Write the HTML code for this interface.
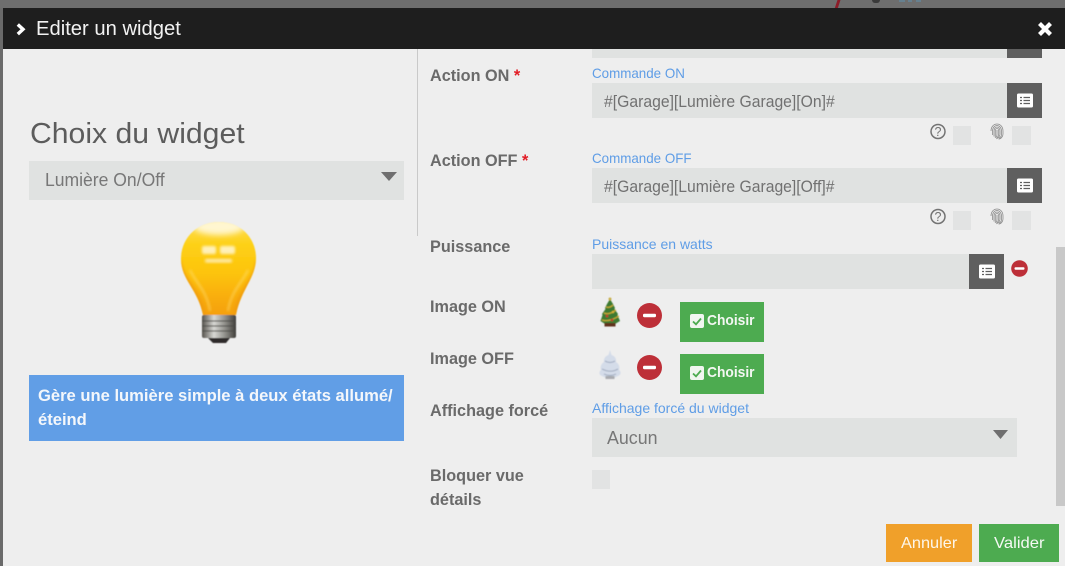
<!DOCTYPE html>
<html lang="fr"><head><meta charset="utf-8"><title>Editer un widget</title>
<style>
html,body{margin:0;padding:0}
body{width:1065px;height:566px;overflow:hidden;position:relative;background:#6e6e6e;font-family:"Liberation Sans",sans-serif}
.a{position:absolute}
.t{position:absolute;white-space:nowrap;transform-origin:0 50%}
.lab{font-size:17px;font-weight:bold;color:#6a6a6a;line-height:20px;transform:scaleX(.955)}
.hint{font-size:14px;color:#5f9de6;line-height:16px;transform:scaleX(1)}
.inp{position:absolute;background:#e0e2e1;height:35px}
.val{font-size:17px;color:#717171;line-height:20px;transform:scaleX(.925)}
.btn{position:absolute;background:#5f5f5f;width:35px;height:35px}
.cb{position:absolute;background:#e2e3e3;width:18px;height:19px}
.grn{position:absolute;background:#4dab50}
.w{color:#fff}
svg{position:absolute;overflow:visible}
</style></head><body>

<div class="a" style="left:836px;top:0;width:3px;height:9px;background:#8c1c28;transform:skewX(-18deg)"></div>
<div class="a" style="left:872px;top:0;width:8px;height:3px;background:#3a3a3a;border-radius:0 0 4px 4px"></div>
<div class="a" style="left:899px;top:0;width:6px;height:2px;background:#66808f"></div>
<div class="a" style="left:908px;top:0;width:4px;height:2px;background:#66808f"></div>
<div class="a" style="left:916px;top:0;width:5px;height:2px;background:#66808f"></div>

<div class="a" style="left:3px;top:8px;width:1062px;height:558px;background:#eeeeee"></div>
<div class="a" style="left:3px;top:8px;width:1062px;height:41px;background:#1e1e1e"></div>

<svg style="left:16px;top:23px" width="10" height="13" viewBox="0 0 10 13"><path d="M1.800 1.500 7 6.300 1.800 11.100" fill="none" stroke="#fff" stroke-width="3.400"/></svg>
<div class="t w" style="left:36px;top:17px;font-size:20px;line-height:24px;color:#f2f2f2;transform:scaleX(1.01)">Editer un widget</div>
<svg style="left:1037px;top:21px" width="16" height="16" viewBox="0 0 16 16"><path d="M2.500 2.500 13.500 13.500M13.500 2.500 2.500 13.500" fill="none" stroke="#fff" stroke-width="4.200"/></svg>

<div class="a" style="left:417px;top:49px;width:1px;height:187px;background:#c9c9c9"></div>

<div class="t" style="left:30px;top:117px;font-size:29px;line-height:34px;color:#5c5c5c;transform:scaleX(1.04)">Choix du widget</div>
<div class="a" style="left:29px;top:161px;width:375px;height:39px;background:#e0e2e1"></div>
<div class="t" style="left:45px;top:170px;font-size:18px;line-height:21px;color:#777;transform:scaleX(.975)">Lumière On/Off</div>
<svg style="left:381px;top:172px" width="16" height="9"><path d="M0 0H16L8 9Z" fill="#6f6f6f"/></svg>

<svg style="left:170px;top:215px" width="100" height="135" viewBox="0 0 100 135">
<defs>
<linearGradient id="b0" x1="0" y1="0" x2="0" y2="1"><stop offset="0" stop-color="#ffdf55"/><stop offset=".25" stop-color="#fdd015"/><stop offset=".55" stop-color="#fdc40d"/><stop offset=".8" stop-color="#f9ae0c"/><stop offset="1" stop-color="#f5a00b"/></linearGradient>
<linearGradient id="g3" x1="0" y1="0" x2="1" y2="0"><stop offset="0" stop-color="#55524c"/><stop offset=".35" stop-color="#d8d8d4"/><stop offset=".7" stop-color="#8b8a85"/><stop offset="1" stop-color="#3f3d39"/></linearGradient>
<filter id="bl" x="-30%" y="-30%" width="160%" height="160%"><feGaussianBlur stdDeviation="1.200"/></filter>
<filter id="bl2" x="-30%" y="-50%" width="160%" height="200%"><feGaussianBlur stdDeviation="3"/></filter>
<filter id="bl3" x="-10%" y="-10%" width="120%" height="120%"><feGaussianBlur stdDeviation=".5"/></filter>
<clipPath id="bc"><path d="M49 7C27 7 11 23 11 44C11 65 28 74 33 100H66C71 74 86 63 86 43C86 23 71 7 49 7Z"/></clipPath>
</defs>
<g filter="url(#bl3)">
<path d="M49 7C27 7 11 23 11 44C11 65 28 74 33 100H66C71 74 86 63 86 43C86 23 71 7 49 7Z" fill="url(#b0)"/>
<g clip-path="url(#bc)">
<path d="M11 44C14 66 31 72 36 100H28L5 60Z" fill="#f09c08" opacity=".8" filter="url(#bl)"/>
<path d="M86 44C83 66 68 72 63 100H71L92 60Z" fill="#f09c08" opacity=".8" filter="url(#bl)"/>
<ellipse cx="49" cy="12" rx="25" ry="8" fill="#fff" opacity=".75" filter="url(#bl2)"/>
<path d="M20 55C26 68 37 76 40 96" stroke="#ffe07a" stroke-width="1.600" fill="none" opacity=".7" filter="url(#bl)"/>
<path d="M78 55C72 68 61 76 58 96" stroke="#ffe07a" stroke-width="1.600" fill="none" opacity=".7" filter="url(#bl)"/>
<rect x="32" y="31" width="14" height="8" rx="2" fill="#fff" opacity=".7" filter="url(#bl)"/>
<rect x="50" y="31" width="15" height="8" rx="2" fill="#fff" opacity=".7" filter="url(#bl)"/>
<rect x="35" y="44" width="27" height="3.500" rx="1.700" fill="#fff" opacity=".65" filter="url(#bl)"/>
</g>
<rect x="32" y="100" width="34" height="23" rx="2" fill="url(#g3)"/>
<path d="M32 106H66M32 111H66M32 116H66" stroke="#4a4a46" stroke-width="1.300" opacity=".7"/>
<path d="M38 123H60L56 128H43Z" fill="#2d2c2a"/>
</g>
</svg>

<div class="a" style="left:29px;top:375px;width:375px;height:66px;background:#619ee6"></div>
<div class="t w" style="left:38px;top:384px;font-size:17px;line-height:24px;font-weight:bold;color:#f4f7fb;transform:scaleX(.975)">Gère une lumière simple à deux états allumé/</div>
<div class="t w" style="left:38px;top:408px;font-size:17px;line-height:24px;font-weight:bold;color:#f4f7fb;transform:scaleX(.975)">éteind</div>

<div class="inp" style="left:592px;top:49px;width:415px;height:9px"></div>
<div class="btn" style="left:1007px;top:49px;height:9px"></div>

<div class="t lab" style="left:430px;top:66px">Action ON <span style="color:#e21b24">*</span></div>
<div class="t hint" style="left:592px;top:65px;transform:scaleX(.955)">Commande ON</div>
<div class="inp" style="left:592px;top:83px;width:415px"></div>
<div class="t val" style="left:604px;top:92px">#[Garage][Lumière Garage][On]#</div>
<div class="btn" style="left:1007px;top:83px"></div>
<svg style="left:1017px;top:93px" width="16" height="15"><rect width="16" height="14" y=".5" rx="1.500" fill="#fff"/><path d="M3 4.500H5M6.500 4.500H13M3 7.500H5M6.500 7.500H13M3 10.500H5M6.500 10.500H13" stroke="#5f5f5f" stroke-width="1.300"/></svg>

<svg style="left:930px;top:124px" width="16" height="16"><circle cx="8" cy="7.500" r="7" fill="none" stroke="#737373" stroke-width="1.500"/><text x="8" y="12" font-size="12.500" text-anchor="middle" fill="#737373" font-family="Liberation Sans">?</text></svg>
<div class="cb" style="left:953px;top:126px"></div>
<svg style="left:990px;top:123px" width="14" height="17" viewBox="0 0 14 17" fill="none" stroke="#8c8c8c" stroke-width=".8"><path d="M1 8C1 4 3.500 1 7 1S13 4 13 8V11C13 13.500 11 16 8.500 16"/><path d="M2.500 12V8C2.500 5 4.500 2.500 7 2.500S11.500 5 11.500 8V11C11.500 13 10.500 14.500 9 15"/><path d="M4 13.500V8C4 6 5.300 4 7 4S10 6 10 8V11C10 12.500 9 14 7.500 15.500"/><path d="M5.300 15V8C5.300 6.800 6 5.500 7 5.500S8.700 6.800 8.700 8V11C8.700 12.500 7.800 14 6.500 16"/><path d="M7 7V11C7 12.500 6.800 13.500 6.200 14.500"/></svg>
<div class="cb" style="left:1012px;top:126px;width:19px"></div>

<div class="t lab" style="left:430px;top:151px">Action OFF <span style="color:#e21b24">*</span></div>
<div class="t hint" style="left:592px;top:150px;transform:scaleX(.955)">Commande OFF</div>
<div class="inp" style="left:592px;top:168px;width:415px"></div>
<div class="t val" style="left:604px;top:177px">#[Garage][Lumière Garage][Off]#</div>
<div class="btn" style="left:1007px;top:168px"></div>
<svg style="left:1017px;top:178px" width="16" height="15"><rect width="16" height="14" y=".5" rx="1.500" fill="#fff"/><path d="M3 4.500H5M6.500 4.500H13M3 7.500H5M6.500 7.500H13M3 10.500H5M6.500 10.500H13" stroke="#5f5f5f" stroke-width="1.300"/></svg>

<svg style="left:930px;top:209px" width="16" height="16"><circle cx="8" cy="7.500" r="7" fill="none" stroke="#737373" stroke-width="1.500"/><text x="8" y="12" font-size="12.500" text-anchor="middle" fill="#737373" font-family="Liberation Sans">?</text></svg>
<div class="cb" style="left:953px;top:211px"></div>
<svg style="left:990px;top:208px" width="14" height="17" viewBox="0 0 14 17" fill="none" stroke="#8c8c8c" stroke-width=".8"><path d="M1 8C1 4 3.500 1 7 1S13 4 13 8V11C13 13.500 11 16 8.500 16"/><path d="M2.500 12V8C2.500 5 4.500 2.500 7 2.500S11.500 5 11.500 8V11C11.500 13 10.500 14.500 9 15"/><path d="M4 13.500V8C4 6 5.300 4 7 4S10 6 10 8V11C10 12.500 9 14 7.500 15.500"/><path d="M5.300 15V8C5.300 6.800 6 5.500 7 5.500S8.700 6.800 8.700 8V11C8.700 12.500 7.800 14 6.500 16"/><path d="M7 7V11C7 12.500 6.800 13.500 6.200 14.500"/></svg>
<div class="cb" style="left:1012px;top:211px;width:19px"></div>

<div class="t lab" style="left:430px;top:237px">Puissance</div>
<div class="t hint" style="left:592px;top:236px;transform:scaleX(1)">Puissance en watts</div>
<div class="inp" style="left:592px;top:254px;width:377px"></div>
<div class="btn" style="left:969px;top:254px"></div>
<svg style="left:979px;top:264px" width="16" height="15"><rect width="16" height="14" y=".5" rx="1.500" fill="#fff"/><path d="M3 4.500H5M6.500 4.500H13M3 7.500H5M6.500 7.500H13M3 10.500H5M6.500 10.500H13" stroke="#5f5f5f" stroke-width="1.300"/></svg>
<svg style="left:1011px;top:260px" width="17" height="17"><circle cx="8.500" cy="8.500" r="8.300" fill="#bd2f38"/><rect x="3.500" y="7.300" width="10" height="2.400" rx="1" fill="#fff"/></svg>
<div class="a" style="left:1056px;top:247px;width:9px;height:259px;background:#c8c8c8"></div>

<div class="t lab" style="left:430px;top:297px">Image ON</div>
<svg style="left:598px;top:297px" width="24" height="32" viewBox="0 0 24 32">
<g filter="url(#bl3)">
<path d="M12 2 15 7 17 11 16.500 12 20 17 19.500 18 22 24 17 27H7L2.500 24 4.500 18 4 17 7.500 12 7 11 9 7Z" fill="#3c7a30"/>
<path d="M4 23C10 25 16 22 21 19M6 16C10 18 14 16 18 13M8 10C11 11 13 10 15 8" stroke="#c9a934" stroke-width="1.300" fill="none"/>
<circle cx="9" cy="19" r="1.300" fill="#c8362d"/><circle cx="15" cy="15" r="1.200" fill="#d8b23a"/><circle cx="14" cy="23" r="1.300" fill="#c8362d"/>
<rect x="6.500" y="26" width="11" height="3.500" fill="#61301f"/>
<circle cx="12" cy="2" r="1.500" fill="#c9b04c"/>
</g>
</svg>
<svg style="left:637px;top:303px" width="25" height="25"><circle cx="12.500" cy="12.500" r="12.500" fill="#bd2f38"/><rect x="6" y="10.800" width="13" height="3.400" rx="1.200" fill="#fff"/></svg>
<div class="grn" style="left:680px;top:302px;width:84px;height:40px"></div>
<svg style="left:690px;top:314px" width="14" height="14"><rect width="14" height="14" rx="2" fill="#f1f6f0"/><path d="M3 7.500 6 10.300 11 4.500" fill="none" stroke="#4dab50" stroke-width="1.800"/></svg>
<div class="t w" style="left:707px;top:311px;font-size:15px;line-height:20px;font-weight:bold;color:#f3f7f2;transform:scaleX(.92)">Choisir</div>

<div class="t lab" style="left:430px;top:349px">Image OFF</div>
<svg style="left:598px;top:349px" width="24" height="32" viewBox="0 0 24 32">
<g filter="url(#bl3)">
<path d="M12 1 13.500 6C17 7 18.500 10 18 13 21 15 22 18 21 21 23.500 23 23 26 20 27L16 29H8L4 27C1 26 .5 23 3 21 2 18 3 15 6 13 5.500 10 7 7 10.500 6Z" fill="#d4dce9"/>
<path d="M7 12C10 14 14 14 17 12M4 20C10 23 15 23 20 20M6 25C10 27 14 27 18 25" stroke="#a7b2c5" stroke-width="1.200" fill="none"/>
<rect x="7.500" y="27" width="9" height="3" fill="#a9abb0"/>
</g>
</svg>
<svg style="left:637px;top:355px" width="25" height="25"><circle cx="12.500" cy="12.500" r="12.500" fill="#bd2f38"/><rect x="6" y="10.800" width="13" height="3.400" rx="1.200" fill="#fff"/></svg>
<div class="grn" style="left:680px;top:354px;width:84px;height:40px"></div>
<svg style="left:690px;top:366px" width="14" height="14"><rect width="14" height="14" rx="2" fill="#f1f6f0"/><path d="M3 7.500 6 10.300 11 4.500" fill="none" stroke="#4dab50" stroke-width="1.800"/></svg>
<div class="t w" style="left:707px;top:363px;font-size:15px;line-height:20px;font-weight:bold;color:#f3f7f2;transform:scaleX(.92)">Choisir</div>

<div class="t lab" style="left:430px;top:401px">Affichage forcé</div>
<div class="t hint" style="left:592px;top:400px">Affichage forcé du widget</div>
<div class="a" style="left:592px;top:418px;width:425px;height:39px;background:#e0e2e1"></div>
<div class="t" style="left:607px;top:428px;font-size:18px;line-height:21px;color:#777;transform:scaleX(.99)">Aucun</div>
<svg style="left:993px;top:430px" width="15" height="9"><path d="M0 0H15L7.500 9Z" fill="#6f6f6f"/></svg>

<div class="t lab" style="left:430px;top:466px">Bloquer vue</div>
<div class="t lab" style="left:430px;top:490px">détails</div>
<div class="cb" style="left:592px;top:470px"></div>

<div class="grn" style="left:886px;top:524px;width:86px;height:38px;background:#f0a02a"></div>
<div class="t w" style="left:901px;top:534px;font-size:16px;line-height:20px;color:#fdf6ea;transform:scaleX(1.02)">Annuler</div>
<div class="grn" style="left:979px;top:524px;width:80px;height:38px"></div>
<div class="t w" style="left:994px;top:534px;font-size:16px;line-height:20px;color:#f4f9f3;transform:scaleX(1.04)">Valider</div>

<div class="a" style="left:0;top:8px;width:3px;height:558px;background:#6a6a6a"></div>
</body></html>
